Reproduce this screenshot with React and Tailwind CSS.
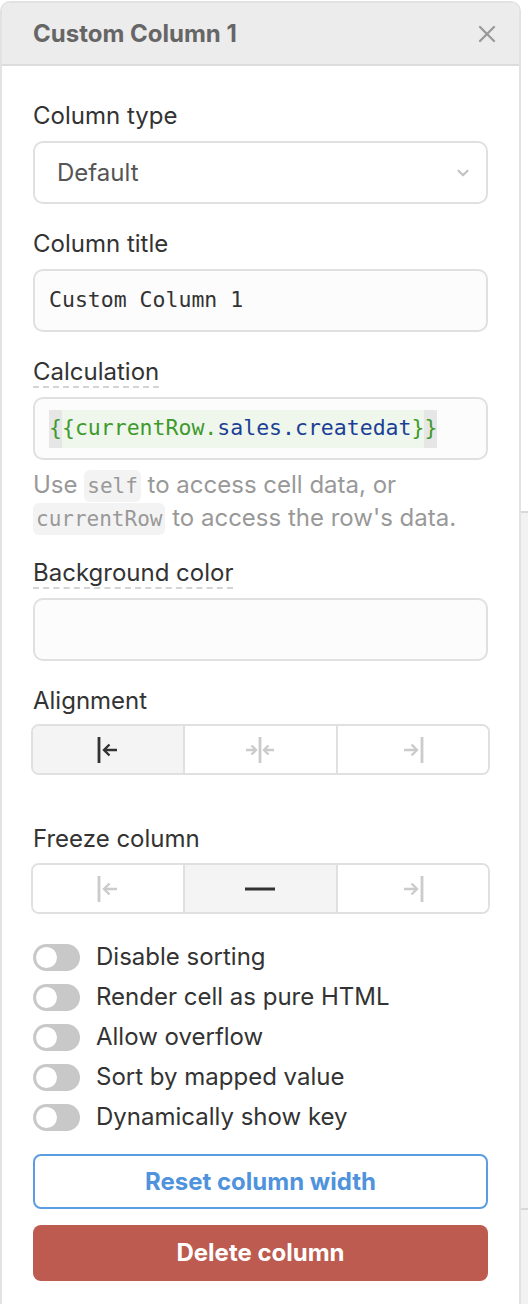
import { X, ChevronDown } from "lucide-react"

const sans = { fontFamily: "Inter, 'Noto Sans', sans-serif" }
const mono = { fontFamily: "'DejaVu Sans Mono', 'Liberation Mono', monospace" }

const AlignLeftIcon = ({ color }) => (
  <svg width="22" height="26" viewBox="0 0 22 26" fill="none" stroke={color} strokeWidth="2.8">
    <line x1="2" y1="0" x2="2" y2="26" />
    <line x1="7" y1="13" x2="20" y2="13" strokeWidth="2.4" />
    <polyline points="12.5,7.5 7,13 12.5,18.5" strokeWidth="2.4" fill="none" />
  </svg>
)

const AlignRightIcon = ({ color }) => (
  <svg width="22" height="26" viewBox="0 0 22 26" fill="none" stroke={color} strokeWidth="2.8">
    <line x1="20" y1="0" x2="20" y2="26" />
    <line x1="2" y1="13" x2="15" y2="13" strokeWidth="2.4" />
    <polyline points="9.5,7.5 15,13 9.5,18.5" strokeWidth="2.4" fill="none" />
  </svg>
)

const AlignCenterIcon = ({ color }) => (
  <svg width="30" height="26" viewBox="0 0 30 26" fill="none" stroke={color} strokeWidth="2.4">
    <line x1="15" y1="0" x2="15" y2="26" strokeWidth="2.8" />
    <line x1="1" y1="13" x2="11" y2="13" />
    <polyline points="6.5,8.5 11,13 6.5,17.5" fill="none" />
    <line x1="19" y1="13" x2="29" y2="13" />
    <polyline points="23.5,8.5 19,13 23.5,17.5" fill="none" />
  </svg>
)

const DashIcon = ({ color }) => (
  <svg width="30" height="6" viewBox="0 0 30 6" fill="none" stroke={color} strokeWidth="3">
    <line x1="0" y1="3" x2="30" y2="3" />
  </svg>
)

const Label = ({ children, dashed, mb }) => (
  <div className={"flex " + mb}>
    <span
      className={
        "text-[24px] leading-[28px] text-[#333] " +
        (dashed ? "border-b-2 border-dashed border-[#d4d4d4]" : "")
      }
    >
      {children}
    </span>
  </div>
)

const Segmented = ({ items, active }) => (
  <div className="flex h-[51px] ml-[-2px] mr-[-2px] rounded-[8px] border-2 border-[#e0e0e0] overflow-hidden">
    {items.map((Icon, i) => (
      <div
        key={i}
        className={
          "flex-1 flex items-center justify-center " +
          (i > 0 ? "border-l-2 border-[#e0e0e0] " : "") +
          (i === active ? "bg-[#f4f4f4]" : "bg-white")
        }
      >
        <Icon color={i === active ? "#333" : "#cbcbcb"} />
      </div>
    ))}
  </div>
)

const Toggle = ({ label }) => (
  <div className="flex items-center h-[40px]">
    <div className="w-[47px] h-[27px] rounded-full bg-[#c8c8c8] flex items-center px-[3px]">
      <div className="w-[21px] h-[21px] rounded-full bg-white" />
    </div>
    <span className="ml-[16px] text-[24px] leading-[28px] text-[#333]">{label}</span>
  </div>
)

export default function App() {
  const toggles = [
    "Disable sorting",
    "Render cell as pure HTML",
    "Allow overflow",
    "Sort by mapped value",
    "Dynamically show key",
  ]

  return (
    <div className="flex w-[528px] h-[1304px] bg-white" style={sans}>
      <div className="w-[521px] h-full mt-[1px] border-2 border-b-0 border-[#e2e2e2] rounded-t-[10px] overflow-hidden bg-white flex flex-col">
        <div className="h-[63px] shrink-0 bg-[#ececec] border-b-2 border-[#dcdcdc] flex items-center justify-between pl-[31px] pr-[18px]">
          <span className="text-[24px] font-bold text-[#666]">Custom Column 1</span>
          <X size={28} strokeWidth={2} className="text-[#9a9a9a]" />
        </div>

        <div className="pl-[31px] pr-[31px] pt-[36px]">
          <Label mb="mb-[11px]">Column type</Label>
          <div className="h-[63px] rounded-[10px] border-2 border-[#e0e0e0] flex items-center justify-between pl-[22px] pr-[14px]">
            <span className="text-[24px] text-[#555]">Default</span>
            <ChevronDown size={18} strokeWidth={3} className="text-[#c4c4c4]" />
          </div>

          <div className="mt-[26px]">
            <Label mb="mb-[11px]">Column title</Label>
            <div className="h-[63px] rounded-[10px] border-2 border-[#e0e0e0] bg-[#fcfcfc] flex items-center pl-[14px]">
              <span className="text-[21.5px] text-[#333]" style={mono}>Custom Column 1</span>
            </div>
          </div>

          <div className="mt-[26px]">
            <Label dashed mb="mb-[9px]">Calculation</Label>
            <div className="h-[63px] rounded-[10px] border-2 border-[#e0e0e0] bg-[#fcfcfc] flex items-center pl-[14px]">
              <span className="flex items-center h-[38px] text-[21.5px]" style={mono}>
                <span className="bg-[#e6e6e6] h-full flex items-center text-[#3f9a2c]">{"{"}</span>
                <span className="bg-[#eff6ec] h-full flex items-center">
                  <span className="text-[#3f9a2c]">{"{currentRow."}</span>
                  <span className="text-[#1c3f96]">sales.createdat</span>
                  <span className="text-[#3f9a2c]">{"}"}</span>
                </span>
                <span className="bg-[#e6e6e6] h-full flex items-center text-[#3f9a2c]">{"}"}</span>
              </span>
            </div>
            <p className="mt-[8px] text-[24px] leading-[33px] text-[#999]">
              Use{" "}
              <code className="bg-[#f3f3f3] rounded-[6px] px-[3px] py-[4px] text-[21px] leading-[16px]" style={mono}>self</code>
              {" "}to access cell data, or{" "}
              <code className="bg-[#f3f3f3] rounded-[6px] px-[3px] py-[4px] text-[21px] leading-[16px]" style={mono}>currentRow</code>
              {" "}to access the row's data.
            </p>
          </div>

          <div className="mt-[25px]">
            <Label dashed mb="mb-[9px]">Background color</Label>
            <div className="h-[63px] rounded-[10px] border-2 border-[#e0e0e0] bg-[#fcfcfc]" />
          </div>

          <div className="mt-[26px]">
            <Label mb="mb-[9px]">Alignment</Label>
            <Segmented items={[AlignLeftIcon, AlignCenterIcon, AlignRightIcon]} active={0} />
          </div>

          <div className="mt-[50px]">
            <Label mb="mb-[10px]">Freeze column</Label>
            <Segmented items={[AlignLeftIcon, DashIcon, AlignRightIcon]} active={1} />
          </div>

          <div className="mt-[23px] flex flex-col">
            {toggles.map((t) => (
              <Toggle key={t} label={t} />
            ))}
          </div>

          <button className="mt-[17px] w-full h-[55px] rounded-[8px] border-2 border-[#5c9de2] bg-white text-[24px] font-bold text-[#4f93dc]">
            Reset column width
          </button>
          <button className="mt-[16px] w-full h-[56px] rounded-[8px] bg-[#bd5b50] text-[24px] font-bold text-white">
            Delete column
          </button>
        </div>
      </div>
      <div className="flex-1 h-full bg-[#f2f2f2] flex flex-col">
        <div className="h-[511px] bg-white" />
        <div className="h-[2px] bg-[#d8d8d8]" />
        <div className="h-[695px]" />
        <div className="h-[2px] bg-[#d8d8d8]" />
      </div>
    </div>
  )
}
